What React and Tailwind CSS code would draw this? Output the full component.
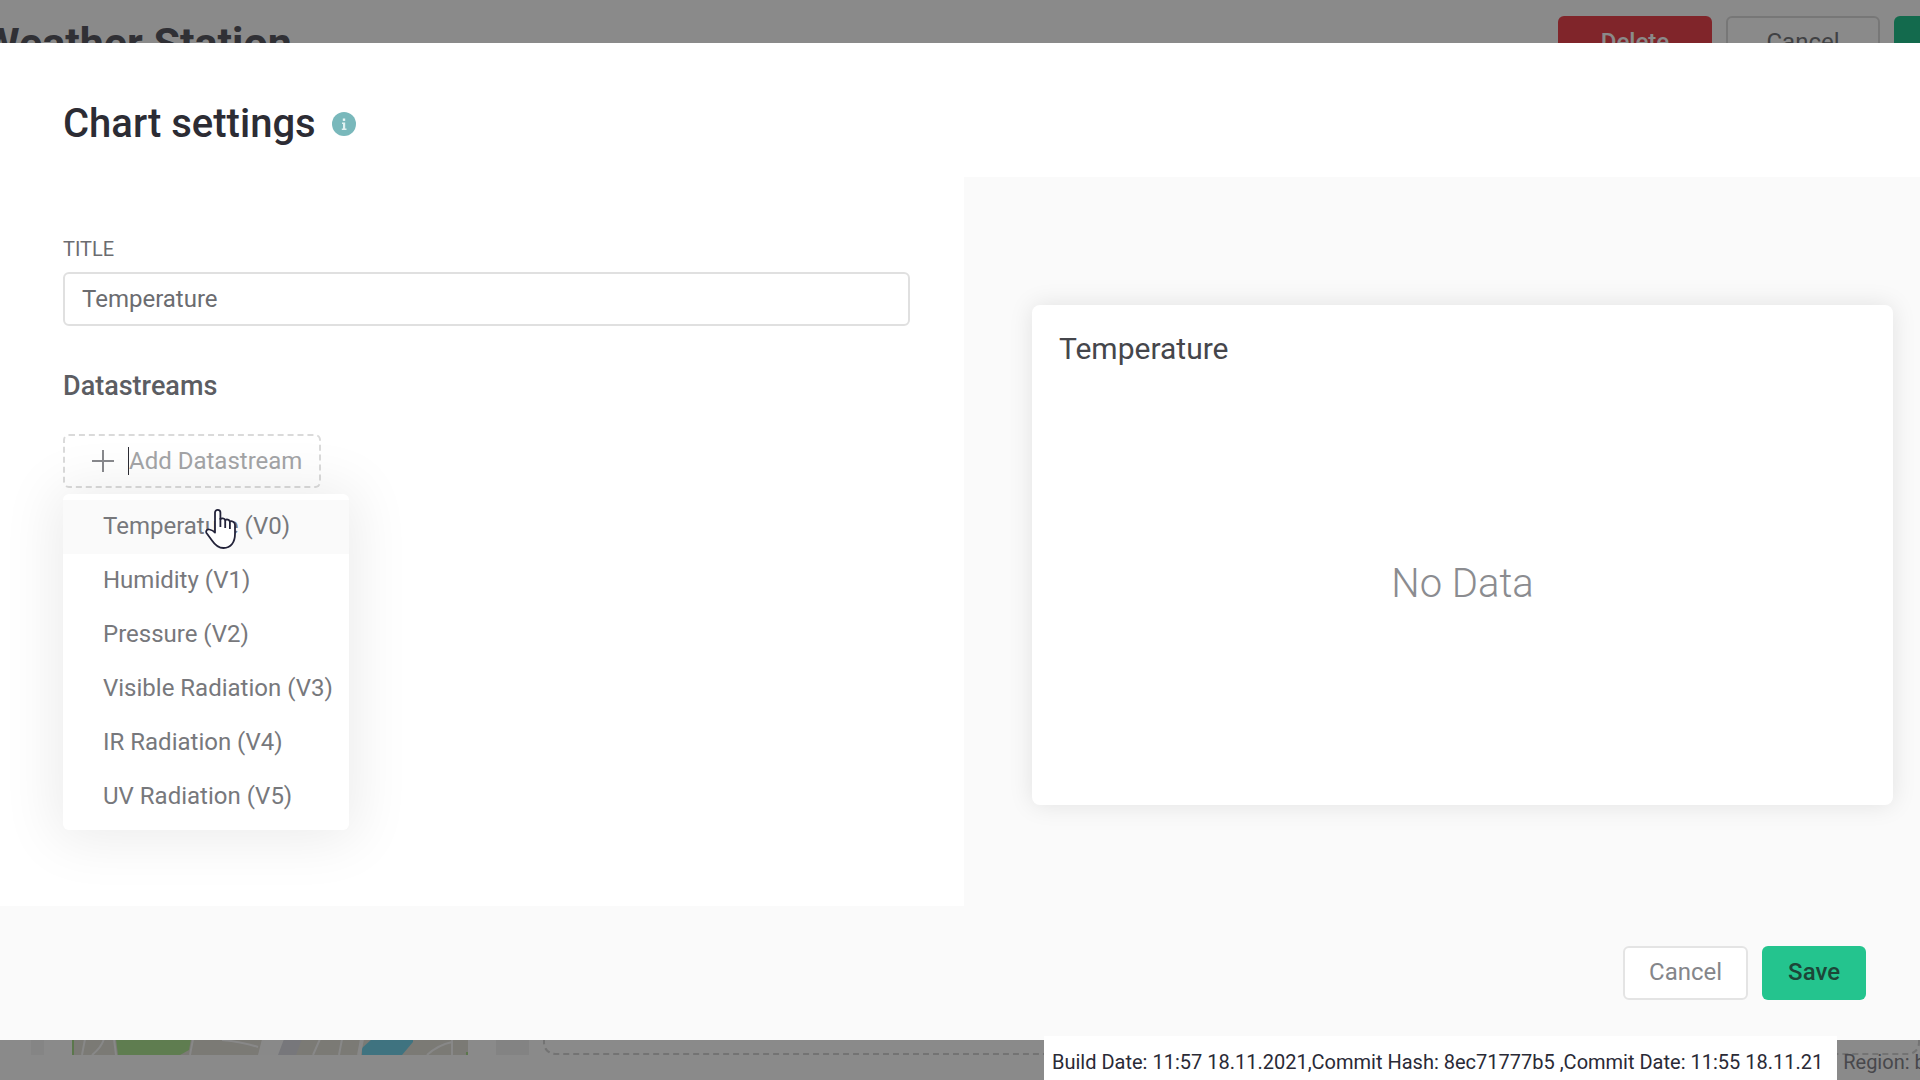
import { useState } from "react";

const DATASTREAMS = [
  "Temperature (V0)",
  "Humidity (V1)",
  "Pressure (V2)",
  "Visible Radiation (V3)",
  "IR Radiation (V4)",
  "UV Radiation (V5)",
];

function InfoIcon() {
  return (
    <svg viewBox="0 0 24 24" className="size-6" aria-hidden="true">
      <circle cx="12" cy="12" r="12" fill="#79b8bb" />
      <rect x="10.8" y="6.500" width="2.400" height="2.400" fill="#e8f5f5" />
      <path d="M10 10.500h3.200v6H14.500v1.500H9.800v-1.500h1.200V12H10z" fill="#e0f1f1" />
    </svg>
  );
}

function PlusIcon() {
  return (
    <svg viewBox="0 0 22 22" className="size-[22px] shrink-0" aria-hidden="true">
      <path d="M11 0v22M0 11h22" stroke="#88898d" strokeWidth="2" fill="none" />
    </svg>
  );
}

function HandCursor() {
  return (
    <svg
      viewBox="0 0 32 42"
      className="pointer-events-none absolute left-[142px] top-[14px] h-[42px] w-8"
      aria-hidden="true"
    >
      <path
        d="M10 24V4.500a2.600 2.600 0 0 1 5.400 0V11c1-1 4-1 4.800 1 1.500-1 4-.5 4.600 1.400 1.800-.6 5.200.2 5.200 3.600v9c0 8-4 14-11.500 14-5 0-8.500-3-11.500-7.500L1.500 25C.5 23 2 20.800 4.500 21.500c2 .5 4 1.500 5.500 3z"
        fill="#fff"
        stroke="#23233a"
        strokeWidth="1.800"
        strokeLinejoin="round"
      />
      <path d="M15.400 10v9M20.200 12v8M24.900 13.500V21" stroke="#23233a" strokeWidth="1.800" fill="none" />
    </svg>
  );
}

// bottom edge of the device location map
function MapStrip() {
  return (
    <svg viewBox="0 0 396 16" className="h-4 w-[396px] shrink-0" aria-hidden="true">
      <rect width="396" height="16" fill="#e3e1d8" />
      <path d="M0 0h2v16H0zM394 13h2v3h-2z" fill="#a8dc8c" />
      <path d="M44 0h75l-2 11-9 5H46z" fill="#b0e794" />
      <path d="M208 0h22l-14 16h-13zM190 0h18l-5 16h-17z" fill="#fdfdfd" />
      <path d="M212 0h18l-6 16h-18z" fill="#dcdce4" />
      <path d="M300 0h41v3l-11 13h-40V9z" fill="#75d5ed" />
      <g fill="none" stroke="#fbfbfb" strokeWidth="2">
        <path d="M13 0l-3 16M20 16q9-7 12-16M42 0l2 16" />
        <path d="M121 0l-3 16M150 1q20 2 36 7" />
        <path d="M248 0l-7 16M270 0l-3 16" />
        <path d="M290 0l-3 16" strokeWidth="4" />
        <path d="M355 16Q366 6 380 3M380 0v16" />
      </g>
    </svg>
  );
}

function DashboardPage() {
  return (
    <div className="absolute inset-0 flex flex-col justify-between overflow-hidden bg-white">
      <div className="-mr-32 -ml-[18px] flex items-start justify-between pt-4">
        <h1 className="text-[43px] leading-[54px] font-bold text-[#5a5a63]">Weather Station</h1>
        <div className="flex gap-[14px]">
          <button
            type="button"
            className="h-[54px] w-[154px] rounded-md bg-[#ed454e] pb-[2px] text-2xl font-medium text-white"
          >
            Delete
          </button>
          <button
            type="button"
            className="h-[54px] w-[154px] rounded-md border-2 border-[#dcdcdc] pb-[2px] text-2xl text-[#77787d]"
          >
            Cancel
          </button>
          <button
            type="button"
            aria-label="Save device"
            className="h-[54px] w-[154px] rounded-md bg-[#24c48e]"
          />
        </div>
      </div>

      <div className="flex items-end pb-[25px] pl-[31px]">
        <div className="mr-7 h-4 w-[13px] bg-[#f6f6f6]" />
        <MapStrip />
        <div className="ml-7 h-4 w-[33px] bg-[#f3f3f3]" />
        <div className="ml-[14px] h-24 flex-1 rounded-xl border-2 border-dashed border-[#d4d4d4]" />
      </div>
    </div>
  );
}

function ChartPreview({ title }) {
  return (
    <div className="flex min-h-[500px] flex-col rounded-lg bg-white px-[27px] pt-6 pb-[6px] shadow-[0_0_24px_rgba(0,0,0,0.1)]">
      <h3 className="text-[30px] leading-10 text-[#45464b]">{title}</h3>
      <div className="flex flex-1 items-center justify-center text-[40px] font-light text-[#8b8c90]">No Data</div>
    </div>
  );
}

export default function App() {
  const [title, setTitle] = useState("Temperature");
  const [query, setQuery] = useState("");

  return (
    <div className="relative h-screen overflow-hidden font-['Roboto',sans-serif]">
      <DashboardPage />

      <div className="absolute inset-0 flex flex-col bg-black/46 pt-[43px] pb-10">
        <div role="dialog" aria-labelledby="dialog-title" className="flex flex-1 flex-col bg-white">
          <header className="flex h-[134px] items-center gap-4 px-[63px] pt-7">
            <h2 id="dialog-title" className="text-[40px] leading-[54px] font-medium text-[#2c2c34]">
              Chart settings
            </h2>
            <InfoIcon />
          </header>

          <div className="grid flex-1 grid-cols-[964fr_956fr]">
            <section className="pt-14 pr-[54px] pl-[63px]">
              <label htmlFor="chart-title" className="block text-xl leading-8 text-[#6b6c70]">
                TITLE
              </label>
              <input
                id="chart-title"
                type="text"
                value={title}
                onChange={(e) => setTitle(e.target.value)}
                className="mt-[7px] h-[54px] w-full rounded-md border-2 border-[#e0e0e0] px-[17px] text-2xl text-[#6b6c70] outline-none"
              />
              <h3 className="mt-10 text-[27px] leading-10 font-medium text-[#5c5d62]">Datastreams</h3>

              <div className="relative mt-7 w-[258px]">
                <div className="flex h-[54px] items-center rounded-md border-2 border-dashed border-[#dadada] pl-[27px]">
                  <PlusIcon />
                  <span className="ml-[14px] h-7 w-px shrink-0 bg-[#2c2c34]" />
                  <input
                    type="text"
                    aria-label="Add Datastream"
                    placeholder="Add Datastream"
                    value={query}
                    onChange={(e) => setQuery(e.target.value)}
                    className="w-full min-w-0 text-2xl text-[#6b6c70] caret-transparent outline-none placeholder:text-[#a3a4a6]"
                  />
                </div>

                <ul className="absolute top-[60px] left-0 w-[286px] rounded-md bg-white pt-[6px] pb-[6px] shadow-[0_2px_56px_8px_rgba(0,0,0,0.08)]">
                  {DATASTREAMS.map((name, i) => (
                    <li key={name}>
                      <button
                        type="button"
                        className={`h-[54px] w-full px-10 pb-[2px] text-left text-2xl whitespace-nowrap text-[#77787c] ${i === 0 ? "bg-[#fafafa]" : ""}`}
                      >
                        {name}
                      </button>
                    </li>
                  ))}
                  <HandCursor />
                </ul>
              </div>
            </section>

            <section className="bg-[#fafafa] pt-32 pr-[27px] pl-[68px]">
              <ChartPreview title={title} />
            </section>
          </div>

          <footer className="flex h-[134px] items-center justify-end gap-[14px] bg-[#fafafa] px-[54px]">
            <button
              type="button"
              className="h-[54px] rounded-md border-2 border-[#e4e4e4] bg-white px-6 pb-[2px] text-2xl text-[#85868a]"
            >
              Cancel
            </button>
            <button
              type="button"
              className="h-[54px] rounded-md bg-[#24c48e] px-[26px] pb-[2px] text-2xl font-medium text-[#1c4638]"
            >
              Save
            </button>
          </footer>
        </div>
      </div>

      <div className="absolute bottom-0 left-[1044px] flex h-11 text-xl whitespace-nowrap text-[#2a2a36]">
        <span className="flex items-center bg-white pt-[7px] pr-[14px] pl-2">
          Build Date: 11:57 18.11.2021,Commit Hash: 8ec71777b5 ,Commit Date: 11:55 18.11.21
        </span>
        <span className="flex items-center pt-[7px] pl-[6px] text-[#48484c]">Region: blynk</span>
      </div>
    </div>
  );
}
